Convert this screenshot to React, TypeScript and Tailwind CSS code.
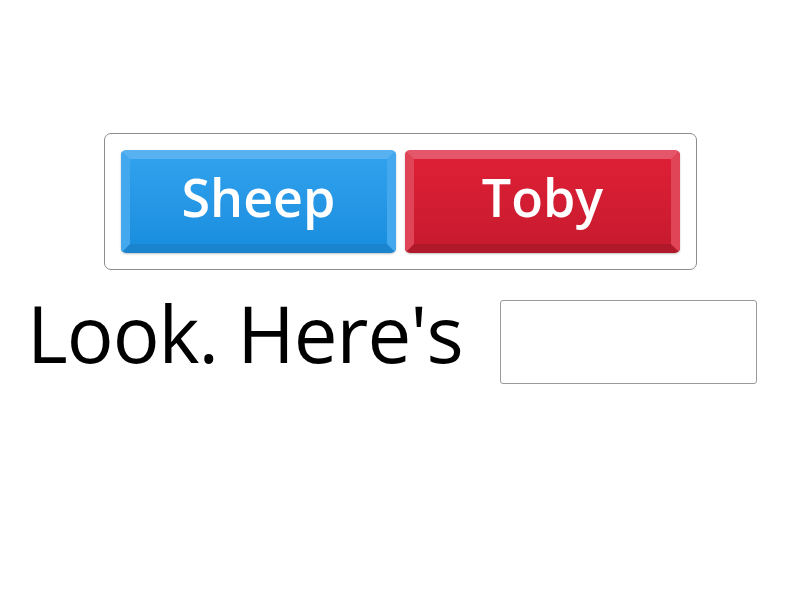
import React from 'react';

const App: React.FC = () => {
  const options = [
    { label: 'Sheep', className: 'bg-gradient-to-b from-[#30a1ec] to-[#1a8edf] border-t-[#58b2f1] border-x-[#44a8ee] border-b-[#1a84cf]' },
    { label: 'Toby', className: 'bg-gradient-to-b from-[#de1f35] to-[#c81b2f] border-t-[#e6566a] border-x-[#e04457] border-b-[#b0192a]' },
  ];

  return (
    <div className="w-[800px] h-[600px] bg-white" style={{ fontFamily: '"Open Sans", sans-serif' }}>
      <div className="pt-[133px] pl-[104px]">
        <div className="w-[593px] h-[137px] border border-[#8c8c8c] rounded-[7px] flex gap-[9px] p-[16px]">
          {options.map(o => (
            <div
              key={o.label}
              className={`flex-1 rounded-[5px] border-[9px] flex items-center justify-center pb-[10px] text-white font-semibold text-[52px] leading-none shadow-[0_1px_2px_rgba(0,0,0,0.25)] ${o.className}`}
            >
              {o.label}
            </div>
          ))}
        </div>
      </div>
      <div className="flex items-start mt-[30px] pl-[27px]">
        <span className="-mt-[6px] text-[78px] leading-none tracking-[-1px] text-black">Look. Here's</span>
        <div className="ml-[37px] w-[257px] h-[84px] border border-[#999] rounded-[3px]" />
      </div>
    </div>
  );
};

export default App;
